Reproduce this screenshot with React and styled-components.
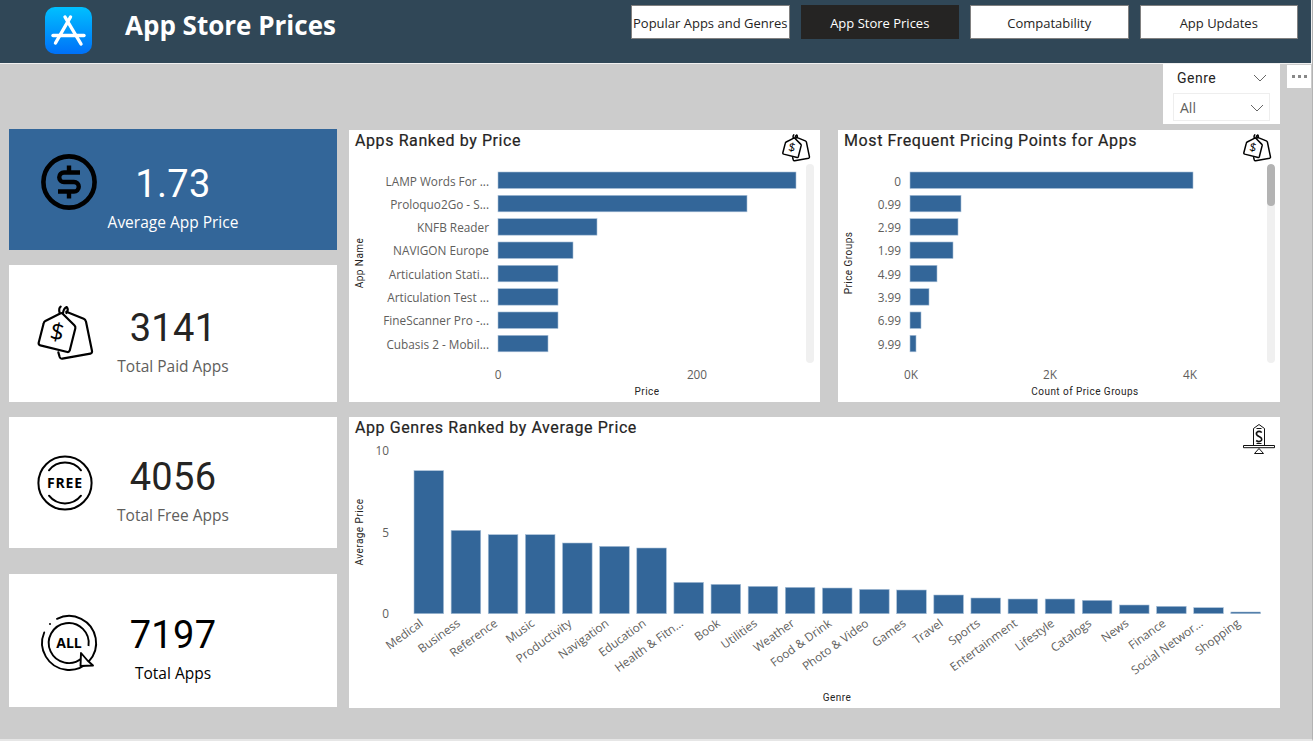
import React from 'react'
import styled, { createGlobalStyle } from 'styled-components'

const BLUE = '#336699'
const DIN = 'Roboto, "Liberation Sans", sans-serif'
const SEGOE = '"Open Sans", "Liberation Sans", sans-serif'

const GlobalStyle = createGlobalStyle`
  html, body { margin: 0; padding: 0; background: #cccccc; }
  * { box-sizing: border-box; }
  text { font-family: ${SEGOE}; }
`

const Page = styled.div`
  width: 1313px;
  height: 741px;
  overflow: hidden;
  background: #cccccc;
  font-family: ${SEGOE};
  border-bottom: 2px solid #e6e6e6;
  border-right: 1px solid #b3b3b3;
`

const Header = styled.header`
  height: 64px;
  display: flex;
  align-items: flex-start;
  background: #304757;
  border-bottom: 1px solid #f0f0f0;
  border-right: 1px solid #f0f0f0;
  padding-left: 45px;
  padding-right: 13px;
`

const Logo = styled.svg`
  width: 47px;
  height: 47px;
  margin-top: 7px;
  flex: none;
`

const AppTitle = styled.h1`
  margin: 7px 0 0 33px;
  font-size: 26px;
  line-height: 36px;
  font-weight: 700;
  color: #fff;
  white-space: nowrap;
`

const Nav = styled.nav`
  margin-left: auto;
  margin-top: 5px;
  display: flex;
  gap: 11px;
`

const NavButton = styled.button`
  width: 158.5px;
  height: 34px;
  padding: 2px 0 0;
  font-family: ${SEGOE};
  font-size: 13px;
  white-space: nowrap;
  color: ${p => (p.$active ? '#fff' : '#252423')};
  background: ${p => (p.$active ? '#252423' : '#fff')};
  border: 1px solid ${p => (p.$active ? '#252423' : '#808080')};
`

const FilterRow = styled.div`
  height: 65px;
  display: flex;
  justify-content: flex-end;
  align-items: flex-start;
  gap: 7px;
  padding-right: 1px;
`

const Slicer = styled.div`
  width: 117px;
  height: 60px;
  background: #fff;
  padding: 0 10px;
`

const SlicerHead = styled.div`
  height: 29px;
  display: flex;
  align-items: center;
  justify-content: space-between;
  padding: 0 3px 2px 4px;
  font-family: ${DIN};
  font-size: 14px;
  letter-spacing: 0.5px;
  color: #252423;
`

const SlicerBox = styled.div`
  height: 28px;
  display: flex;
  align-items: center;
  justify-content: space-between;
  padding: 1px 5px 0 6px;
  border: 1px solid #eeeeee;
  font-size: 14px;
  color: #605e5c;
`

const Chevron = styled.svg`
  width: 14px;
  height: 8px;
  fill: none;
  stroke: #666;
  stroke-width: 1;
`

const MoreBox = styled.div`
  width: 24px;
  height: 23px;
  margin-top: 1px;
  background: #fff;
  display: flex;
  align-items: center;
  justify-content: center;
  gap: 3px;
`

const Dot = styled.span`
  width: 3px;
  height: 3px;
  background: #888;
`

const Content = styled.main`
  display: flex;
  gap: 12px;
  padding-left: 9px;
`

const LeftColumn = styled.div`
  width: 328px;
  display: flex;
  flex-direction: column;
  flex: none;
`

const Card = styled.section`
  height: ${p => p.$height}px;
  margin-bottom: ${p => p.$gap}px;
  display: grid;
  grid-template-columns: 97px 134px 97px;
  align-items: center;
  background: ${p => (p.$blue ? BLUE : '#fff')};
`

const CardIcon = styled.svg`
  display: block;
  width: ${p => p.$size}px;
  height: ${p => p.$size}px;
  margin-left: ${p => p.$left}px;
  margin-top: ${p => p.$top || 0}px;
  overflow: visible;
`

const CardText = styled.div`
  padding-top: 25px;
  text-align: center;
  white-space: nowrap;
`

const Value = styled.div`
  font-family: ${DIN};
  font-size: 38px;
  line-height: 40px;
  letter-spacing: 0.3px;
  color: ${p => p.$color};
`

const Label = styled.div`
  font-size: 15.5px;
  line-height: 36px;
  color: ${p => p.$color};
`

const RightColumn = styled.div`
  width: 931px;
  display: flex;
  flex-direction: column;
  padding-top: 1px;
`

const TopCharts = styled.div`
  display: flex;
  gap: 18px;
  margin-bottom: 15px;
`

const ChartCard = styled.section`
  position: relative;
  width: ${p => p.$width}px;
  height: ${p => p.$height}px;
  background: #fff;
`

const ChartTitle = styled.h2`
  margin: 0;
  height: 22px;
  padding-left: 6px;
  font-family: ${DIN};
  font-size: 16px;
  line-height: 22px;
  font-weight: 400;
  letter-spacing: 0.6px;
  color: #252423;
  -webkit-text-stroke: 0.2px #252423;
`

const ChartSvg = styled.svg`
  display: block;
`

const CornerIcon = styled.svg`
  position: absolute;
  top: ${p => p.$top}px;
  right: ${p => p.$right}px;
  width: ${p => p.$w}px;
  height: ${p => p.$h}px;
`

const ScrollTrack = styled.div`
  position: absolute;
  top: 34px;
  right: ${p => p.$right}px;
  width: 8px;
  height: 199px;
  border-radius: 4px;
  background: #f0f0f0;
  overflow: hidden;
`

const ScrollThumb = styled.div`
  height: 42px;
  background: #b3b3b3;
  border-radius: 4px;
`

const AxisTick = styled.text`
  font-size: 11.8px;
  fill: #605e5c;
`

const AxisName = styled.text`
  font-family: ${DIN};
  font-size: 10px;
  letter-spacing: 0.45px;
  fill: #252423;
`

const Bar = styled.rect`
  fill: ${BLUE};
  stroke: #a9c0d8;
  stroke-width: 0.6;
`

const priceRows = [
  ['LAMP Words For ...', 796],
  ['Proloquo2Go - S...', 747],
  ['KNFB Reader', 597],
  ['NAVIGON Europe', 573],
  ['Articulation Stati...', 558],
  ['Articulation Test ...', 558],
  ['FineScanner Pro -...', 558],
  ['Cubasis 2 - Mobil...', 548],
]

const pointRows = [
  ['0', 1193],
  ['0.99', 961],
  ['2.99', 958],
  ['1.99', 953],
  ['4.99', 937],
  ['3.99', 929],
  ['6.99', 921],
  ['9.99', 916],
]

const genres = [
  ['Medical', 176], ['Business', 355], ['Reference', 368], ['Music', 368],
  ['Productivity', 393], ['Navigation', 403], ['Education', 408],
  ['Health & Fitn...', 511], ['Book', 517], ['Utilities', 523], ['Weather', 526],
  ['Food & Drink', 528], ['Photo & Video', 532], ['Games', 534], ['Travel', 549],
  ['Sports', 558], ['Entertainment', 561], ['Lifestyle', 561], ['Catalogs', 565],
  ['News', 579], ['Finance', 583], ['Social Networ...', 587], ['Shopping', 600],
]

// the charts are drawn in page coordinates, the viewBox shifts them into the card
function HBarChart({ box, rows, start, labelX, ticks, xName, xNameX, yName, yNameX }) {
  const [x, y, w, h] = box
  return (
    <ChartSvg width={w} height={h} viewBox={`${x} ${y} ${w} ${h}`}>
      {rows.map(([name, end], i) => {
        const top = 172 + i * 23.33
        return (
          <g key={name}>
            <AxisTick x={labelX} y={top + 13.5} textAnchor="end">{name}</AxisTick>
            <Bar x={start} y={top} width={end - start} height={16.5} />
          </g>
        )
      })}
      {ticks.map(([t, tx]) => (
        <AxisTick key={t} x={tx} y={379} textAnchor="middle">{t}</AxisTick>
      ))}
      <AxisName x={xNameX} y={395} textAnchor="middle">{xName}</AxisName>
      <AxisName transform={`translate(${yNameX} 263) rotate(-90)`} textAnchor="middle">{yName}</AxisName>
    </ChartSvg>
  )
}

function GenreChart() {
  const base = 613.7
  return (
    <ChartSvg width={931} height={269} viewBox="349 439 931 269">
      {[['10', 455], ['5', 537], ['0', 618]].map(([t, y]) => (
        <AxisTick key={t} x={389} y={y} textAnchor="end">{t}</AxisTick>
      ))}
      {genres.map(([name, top], i) => {
        const x = 414 + i * 37.13
        const y = 412 + top / 3
        return (
          <g key={name}>
            <Bar x={x} y={y} width={29.6} height={base - y} />
            <AxisTick transform={`translate(${x + 10} 625) rotate(-36)`} textAnchor="end">{name}</AxisTick>
          </g>
        )
      })}
      <AxisName x={837} y={701} textAnchor="middle">Genre</AxisName>
      <AxisName transform="translate(363 532) rotate(-90)" textAnchor="middle">Average Price</AxisName>
    </ChartSvg>
  )
}

const TagPaths = ({ sw }) => (
  <g fill="none" stroke="#000" strokeWidth={sw} strokeLinejoin="round" strokeLinecap="round">
    <path d="M198 562 L250 583 Q255 585 257 592 L275 680 Q276 686 270 688 L186 703 Q180 704 178 698 L174 684" />
    <path d="M181 567 L135 590 Q131 592 130 597 L115 655 Q114 661 120 663 L201 683 Q206 684 208 679 L225 612 Q226 607 222 603 L187 568 Q184 565 181 567 Z" />
    <path d="M178 566 Q174 552 181 547 M188 566 Q190 552 199 548 Q206 556 198 566" />
    <text x="170" y="648" fontSize="72" fontFamily="Liberation Sans, sans-serif" textAnchor="middle" fill="#000" stroke="none" transform="rotate(12 170 625)">$</text>
  </g>
)

const AppStoreLogo = () => (
  <Logo viewBox="0 0 47 47">
    <defs>
      <linearGradient id="storeBg" x1="0" y1="0" x2="0" y2="1">
        <stop offset="0" stopColor="#00c0ff" />
        <stop offset="1" stopColor="#0070f8" />
      </linearGradient>
    </defs>
    <rect width="47" height="47" rx="10" fill="url(#storeBg)" />
    <g stroke="#fff" strokeWidth="3.4" strokeLinecap="round" fill="none">
      <path d="M25.5 10 L10.5 36" />
      <path d="M20 10 L36 37" />
      <path d="M8 28.5 H39" />
    </g>
  </Logo>
)

const CoinIcon = () => (
  <CardIcon $size={56} $left={32} $top={-16} viewBox="0 0 56 56" fill="none" stroke="#000">
    <circle cx="28" cy="28" r="25.6" strokeWidth="4.6" />
    <path d="M39 18.5 H23 a4.75 4.75 0 0 0 0 9.5 H33 a4.75 4.75 0 0 1 0 9.5 H17" strokeWidth="4.4" />
    <path d="M28 11.5 V18 M28 38 V44.5" strokeWidth="4.4" />
  </CardIcon>
)

const TagsIcon = () => (
  <CardIcon $size={56.7} $left={27.7} viewBox="110 542 170 170">
    <TagPaths sw={6.5} />
  </CardIcon>
)

const FreeIcon = () => (
  <CardIcon $size={56} $left={28} viewBox="0 0 56 56" fill="none" stroke="#000">
    <circle cx="28" cy="28" r="26.6" strokeWidth="2" />
    <path d="M12 15.3 A20.4 20.4 0 0 1 44 15.3 M12 40.7 A20.4 20.4 0 0 0 44 40.7" strokeWidth="2" strokeLinecap="round" />
    <text x="28" y="33" textAnchor="middle" fontSize="14" fontWeight="700" letterSpacing="0.9" fill="#000" stroke="none">FREE</text>
  </CardIcon>
)

const AllIcon = () => (
  <CardIcon $size={56} $left={32} $top={5} viewBox="0 0 56 56" fill="none" stroke="#000">
    <path d="M16 3.8 A27 27 0 1 1 3.2 17.5" strokeWidth="1.9" strokeLinecap="round" />
    <circle cx="9" cy="9" r="1" fill="#000" stroke="none" />
    <path d="M41 43 A20 20 0 1 1 47.5 31" strokeWidth="1.9" />
    <path d="M40 38 L39.5 51 L52 50.5 L46.5 45.5 Z" fill="#fff" strokeWidth="1.9" strokeLinejoin="round" />
    <text x="28" y="33" textAnchor="middle" fontSize="14" fontWeight="700" fill="#000" stroke="none">ALL</text>
  </CardIcon>
)

const cards = [
  { value: '1.73', label: 'Average App Price', height: 121, gap: 15, blue: true, valueColor: '#fff', labelColor: '#fff', icon: <CoinIcon /> },
  { value: '3141', label: 'Total Paid Apps', height: 137, gap: 15, valueColor: '#252423', labelColor: '#605e5c', icon: <TagsIcon /> },
  { value: '4056', label: 'Total Free Apps', height: 131, gap: 26, valueColor: '#252423', labelColor: '#605e5c', icon: <FreeIcon /> },
  { value: '7197', label: 'Total Apps', height: 133, gap: 0, valueColor: '#000', labelColor: '#000', icon: <AllIcon /> },
]

export default function App() {
  return (
    <Page>
      <GlobalStyle />
      <Header>
        <AppStoreLogo />
        <AppTitle>App Store Prices</AppTitle>
        <Nav>
          <NavButton>Popular Apps and Genres</NavButton>
          <NavButton $active>App Store Prices</NavButton>
          <NavButton>Compatability</NavButton>
          <NavButton>App Updates</NavButton>
        </Nav>
      </Header>
      <FilterRow>
        <Slicer>
          <SlicerHead>
            Genre
            <Chevron viewBox="0 0 14 8"><path d="M1 1 L7 7 L13 1" /></Chevron>
          </SlicerHead>
          <SlicerBox>
            All
            <Chevron viewBox="0 0 14 8"><path d="M1 1 L7 7 L13 1" /></Chevron>
          </SlicerBox>
        </Slicer>
        <MoreBox><Dot /><Dot /><Dot /></MoreBox>
      </FilterRow>
      <Content>
        <LeftColumn>
          {cards.map(c => (
            <Card key={c.label} $height={c.height} $gap={c.gap} $blue={c.blue}>
              {c.icon}
              <CardText>
                <Value $color={c.valueColor}>{c.value}</Value>
                <Label $color={c.labelColor}>{c.label}</Label>
              </CardText>
            </Card>
          ))}
        </LeftColumn>
        <RightColumn>
          <TopCharts>
            <ChartCard $width={471} $height={272}>
              <ChartTitle>Apps Ranked by Price</ChartTitle>
              <HBarChart
                box={[349, 152, 471, 250]}
                rows={priceRows}
                start={498}
                labelX={489}
                ticks={[['0', 498], ['200', 697]]}
                xName="Price"
                xNameX={647}
                yName="App Name"
                yNameX={363}
              />
              <CornerIcon $top={3.5} $right={9.5} $w={28.3} $h={28.3} viewBox="110 542 170 170"><TagPaths sw={9} /></CornerIcon>
              <ScrollTrack $right={6} />
            </ChartCard>
            <ChartCard $width={442} $height={272}>
              <ChartTitle>Most Frequent Pricing Points for Apps</ChartTitle>
              <HBarChart
                box={[838, 152, 442, 250]}
                rows={pointRows}
                start={910}
                labelX={901}
                ticks={[['0K', 911], ['2K', 1050], ['4K', 1190]]}
                xName="Count of Price Groups"
                xNameX={1085}
                yName="Price Groups"
                yNameX={852}
              />
              <CornerIcon $top={3.5} $right={8.5} $w={28.3} $h={28.3} viewBox="110 542 170 170"><TagPaths sw={9} /></CornerIcon>
              <ScrollTrack $right={5}><ScrollThumb /></ScrollTrack>
            </ChartCard>
          </TopCharts>
          <ChartCard $width={931} $height={291}>
            <ChartTitle>App Genres Ranked by Average Price</ChartTitle>
            <GenreChart />
            <CornerIcon $top={5} $right={5} $w={32} $h={32} viewBox="0 0 32 32" fill="none" stroke="#111">
              <path d="M10.5 23.5 V6.5 L16 2.5 L21.5 6.5 V23.5" strokeWidth="1" />
              <path d="M13.5 6.5 H18.5 M13.5 21.5 H18.5" strokeWidth="1" />
              <path d="M18.8 10.5 Q16 8.2 13.6 10.5 Q12.6 13 16 14.5 Q19.6 16 18.4 18.5 Q16 20.6 13.2 18.5" strokeWidth="1.6" />
              <path d="M0.5 23.5 H31.5 V25.7 H0.5 Z" strokeWidth="1" />
              <path d="M16 26.5 L11.5 31.5 H20.5 Z" strokeWidth="1" />
            </CornerIcon>
          </ChartCard>
        </RightColumn>
      </Content>
    </Page>
  )
}
